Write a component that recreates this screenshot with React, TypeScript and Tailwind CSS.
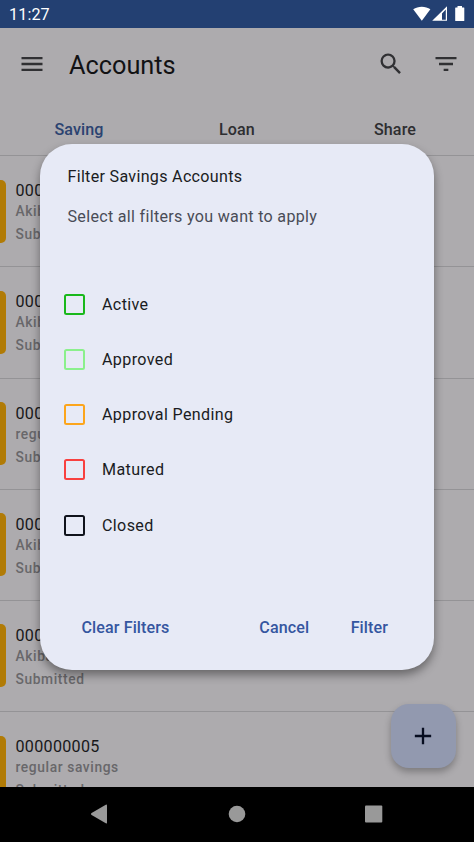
import React, { useState } from 'react';

interface Account {
  id: number;
  accountNo: string;
  product: string;
  status: string;
}

interface FilterOption {
  label: string;
  borderClass: string;
}

const accounts: Account[] = [
  { id: 1, accountNo: '000000001', product: 'Akiba', status: 'Submitted' },
  { id: 2, accountNo: '000000002', product: 'Akiba', status: 'Submitted' },
  { id: 3, accountNo: '000000003', product: 'regular savings', status: 'Submitted' },
  { id: 4, accountNo: '000000004', product: 'Akiba', status: 'Submitted' },
  { id: 5, accountNo: '000000006', product: 'Akiba', status: 'Submitted' },
  { id: 6, accountNo: '000000005', product: 'regular savings', status: 'Submitted' },
];

const filterOptions: FilterOption[] = [
  { label: 'Active', borderClass: 'border-[#19b81b]' },
  { label: 'Approved', borderClass: 'border-[#8bf08c]' },
  { label: 'Approval Pending', borderClass: 'border-[#fca51c]' },
  { label: 'Matured', borderClass: 'border-[#f8403f]' },
  { label: 'Closed', borderClass: 'border-[#10131c]' },
];

const tabs = ['Saving', 'Loan', 'Share'];

const StatusBar: React.FC = () => (
  <div className="flex h-7 shrink-0 items-center justify-between bg-[#234072] pl-[9px] pr-[9px] text-white">
    <span className="pt-px text-[16.2px] leading-7 tracking-[0.1px]">11:27</span>
    <svg width="52" height="16" viewBox="0 0 52 16" fill="currentColor">
      <path d="M0.2 3.2C5 -0.2 12.6 -0.2 17.4 3.2L8.8 14.7Z" />
      <path fillRule="evenodd" d="M19.2 14.7L34 0.2V14.7ZM29 7.4V13.7H32.8V3.6Z" />
      <path d="M44.5 0H49V1.5H51Q51.3 1.5 51.3 2V14.5Q51.3 15 50.8 15H42.8Q42.2 15 42.2 14.5V2Q42.2 1.5 42.7 1.5H44.5Z" />
    </svg>
  </div>
);

const TopBar: React.FC = () => (
  <div className="flex h-[75px] shrink-0 items-center pl-[18px] pr-[14px] text-[#303033]">
    <button aria-label="Menu" className="-mt-[3px]">
      <svg width="28" height="28" viewBox="0 0 24 24" fill="currentColor">
        <path d="M3 18h18v-2H3v2zm0-5h18v-2H3v2zm0-7v2h18V6H3z" />
      </svg>
    </button>
    <h1 className="ml-[23px] flex-1 text-[25.3px] leading-8 text-[#121214]">Accounts</h1>
    <button aria-label="Search" className="-mt-[3px] mr-[27px]">
      <svg width="28" height="28" viewBox="0 0 24 24" fill="currentColor">
        <path d="M15.5 14h-.79l-.28-.27A6.47 6.47 0 0 0 16 9.5 6.5 6.5 0 1 0 9.5 16c1.61 0 3.09-.59 4.23-1.57l.27.28v.79l5 4.99L20.49 19l-4.99-5zm-6 0C7.01 14 5 11.99 5 9.5S7.01 5 9.5 5 14 7.01 14 9.5 11.99 14 9.5 14z" />
      </svg>
    </button>
    <button aria-label="Filter" className="-mt-[3px]">
      <svg width="28" height="28" viewBox="0 0 24 24" fill="currentColor">
        <path d="M10 18h4v-2h-4v2zM3 6v2h18V6H3zm3 7h12v-2H6v2z" />
      </svg>
    </button>
  </div>
);

const AccountRow: React.FC<{ account: Account }> = ({ account }) => (
  <div className="flex h-[111.2px] shrink-0 items-start border-t border-[#949396] pt-[23.4px]">
    <div className="h-[63px] w-1.5 shrink-0 rounded-r-[5px] bg-[#b17b06]"></div>
    <div className="ml-[9.5px] pt-[1.6px]">
      <p className="text-[16.1px] leading-5 tracking-[0.3px] text-[#18181a]">{account.accountNo}</p>
      <p className="text-[13.8px] font-medium leading-5 tracking-[0.6px] text-[#68676a]">{account.product}</p>
      <p className="mt-[3px] text-[13.8px] font-medium leading-5 tracking-[0.6px] text-[#68676a]">{account.status}</p>
    </div>
  </div>
);

const FilterDialog: React.FC = () => {
  const [selected, setSelected] = useState<string[]>([]);

  const toggle = (label: string) => {
    setSelected(selected.includes(label) ? selected.filter((s) => s !== label) : [...selected, label]);
  };

  return (
    <div
      role="dialog"
      className="flex h-[526px] w-[394px] flex-col rounded-[32px] bg-[#e7eaf6] text-[#1a1c22] shadow-[0_5px_10px_rgba(0,0,0,0.4)]"
    >
      <h2 className="ml-[27.5px] mt-[23px] text-[16.1px] leading-5 tracking-[0.3px]">Filter Savings Accounts</h2>
      <p className="ml-[27.5px] mt-5 text-[16.1px] leading-5 tracking-[0.3px] text-[#494c56]">
        Select all filters you want to apply
      </p>
      <div className="mt-[49.6px]">
        {filterOptions.map((option) => (
          <button
            key={option.label}
            onClick={() => toggle(option.label)}
            className="flex h-[55.25px] w-full items-center pl-6"
          >
            <span
              className={`h-[21px] w-[21px] rounded-[2.5px] border-2 ${option.borderClass} ${selected.includes(option.label) ? 'bg-[#2f4f94]' : ''}`}
            ></span>
            <span className="ml-[17px] pt-px text-[16.1px] leading-5 tracking-[0.36px]">{option.label}</span>
          </button>
        ))}
      </div>
      <div className="mt-[65.4px] flex pl-[41.5px] pr-[46px] text-[16.1px] font-medium leading-5 tracking-[0.1px] text-[#3556a0]">
        <button>Clear Filters</button>
        <button className="ml-auto">Cancel</button>
        <button className="ml-[41.5px]">Filter</button>
      </div>
    </div>
  );
};

const NavigationBar: React.FC = () => (
  <div className="flex h-[55px] shrink-0 items-center justify-center bg-black pb-[1.5px]">
    <svg width="292" height="20" viewBox="0 0 292 20" fill="#999999">
      <path d="M14.8 0.8Q16 0.2 16 1.5V18.5Q16 19.8 14.8 19.2L0.6 11Q-0.6 10 0.6 9Z" />
      <circle cx="146" cy="10" r="8.3" />
      <rect x="274" y="1.4" width="17.3" height="17.2" rx="1" />
    </svg>
  </div>
);

const App: React.FC = () => {
  const [activeTab, setActiveTab] = useState('Saving');

  return (
    <div className="relative flex h-[842px] w-[474px] flex-col overflow-hidden bg-[#adabae] font-[Roboto,sans-serif]">
      <StatusBar />
      <TopBar />
      <div className="grid h-[52.3px] shrink-0 grid-cols-3">
        {tabs.map((tab) => (
          <button
            key={tab}
            onClick={() => setActiveTab(tab)}
            className={`pt-[1.5px] text-[16.1px] font-medium leading-5 tracking-[0.1px] ${tab === activeTab ? 'text-[#2b4371]' : 'text-[#2e2e31]'}`}
          >
            {tab}
          </button>
        ))}
      </div>
      <div className="flex min-h-0 flex-1 flex-col overflow-hidden">
        {accounts.map((account) => (
          <AccountRow key={account.id} account={account} />
        ))}
      </div>
      <NavigationBar />

      {/* Floating add button */}
      <button
        aria-label="Add account"
        className="absolute bottom-[74px] right-[18px] flex h-16 w-[65.5px] items-center justify-center rounded-[18px] bg-[#9299af] text-[#070d20] shadow-[0_4px_7px_rgba(0,0,0,0.28)]"
      >
        <svg width="28" height="28" viewBox="0 0 24 24" fill="currentColor">
          <path d="M19 13h-6v6h-2v-6H5v-2h6V5h2v6h6v2z" />
        </svg>
      </button>

      {/* Dialog */}
      <div className="absolute left-10 top-36">
        <FilterDialog />
      </div>
    </div>
  );
};

export default App;
